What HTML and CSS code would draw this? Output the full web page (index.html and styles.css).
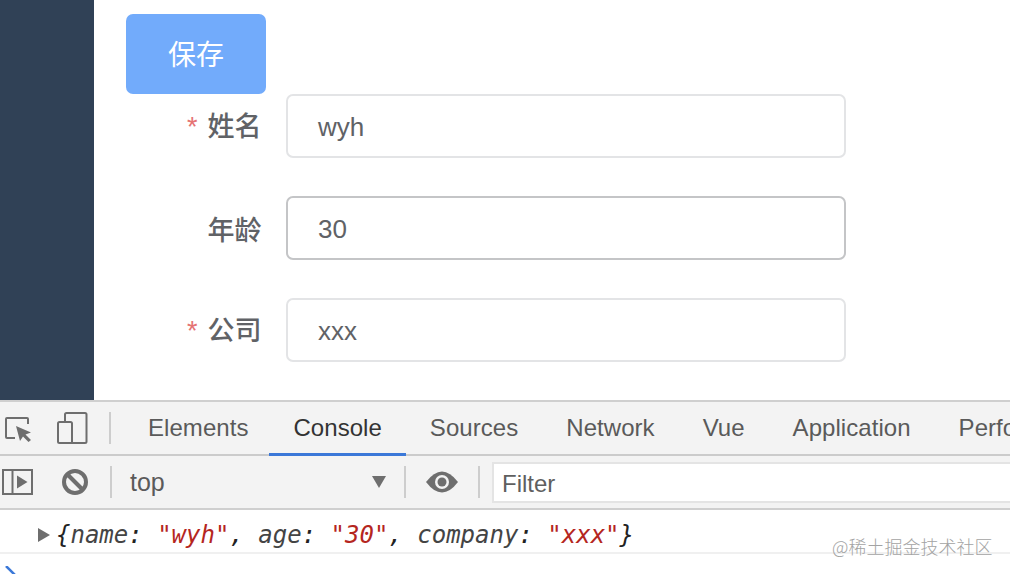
FILE: index.html
```html
<!DOCTYPE html>
<html lang="zh">
<head>
<meta charset="utf-8">
<title>表单</title>
<link rel="stylesheet" href="styles.css">
</head>
<body>
<div class="page">
  <aside class="sidebar"></aside>
  <main class="main">
    <button class="save">保存</button>
    <form class="form">
      <div class="row">
        <label class="label"><span class="req">*</span>姓名</label>
        <div class="input">wyh</div>
      </div>
      <div class="row">
        <label class="label">年龄</label>
        <div class="input hover">30</div>
      </div>
      <div class="row">
        <label class="label"><span class="req">*</span>公司</label>
        <div class="input">xxx</div>
      </div>
    </form>
  </main>
</div>
<section class="devtools">
  <div class="tabbar">
    <svg class="ic-inspect" width="30" height="30" viewBox="0 0 30 30">
      <path d="M11 25H3Q2 25 2 24V6Q2 5 3 5H23Q24 5 24 6V11" fill="none" stroke="#6e6e6e" stroke-width="2"/>
      <path d="M12 13L27 19.500L21.500 21.500L27 27L24.500 29L19 23.500L16 28Z" fill="#6e6e6e"/>
    </svg>
    <svg class="ic-device" width="32" height="34" viewBox="0 0 32 34">
      <path d="M9 11V3.500Q9 2 10.500 2H29Q30.500 2 30.500 3.500V30.500Q30.500 32 29 32H3.500Q2 32 2 30.500V12.500Q2 11 3.500 11H14.500Q16 11 16 12.500V32" fill="none" stroke="#6e6e6e" stroke-width="2"/>
    </svg>
    <span class="sep sep-a"></span>
    <nav class="tabs">
      <span class="tab">Elements</span>
      <span class="tab active">Console</span>
      <span class="tab">Sources</span>
      <span class="tab">Network</span>
      <span class="tab">Vue</span>
      <span class="tab">Application</span>
      <span class="tab">Performance</span>
    </nav>
  </div>
  <div class="toolbar">
    <svg class="ic-drawer" width="31" height="26" viewBox="0 0 31 26">
      <rect x="1" y="1" width="29" height="24" fill="none" stroke="#6e6e6e" stroke-width="2"/>
      <path d="M10.500 1V25" stroke="#6e6e6e" stroke-width="2"/>
      <path d="M15 6.500L25.500 13L15 19.500Z" fill="#6e6e6e"/>
    </svg>
    <svg class="ic-block" width="28" height="28" viewBox="0 0 28 28">
      <circle cx="14" cy="14" r="11" fill="none" stroke="#6e6e6e" stroke-width="4"/>
      <path d="M6 6L22 22" stroke="#6e6e6e" stroke-width="4"/>
    </svg>
    <span class="sep sep-b"></span>
    <div class="context">
      <span class="context-name">top</span>
      <svg class="caret" width="14" height="12" viewBox="0 0 14 12"><path d="M0 0H14L7 12Z" fill="#6e6e6e"/></svg>
    </div>
    <span class="sep"></span>
    <svg class="ic-eye" width="34" height="24" viewBox="0 0 34 24">
      <path d="M1 12Q9 1.500 17 1.500T33 12Q25 22.500 17 22.500T1 12Z" fill="#6e6e6e"/>
      <circle cx="17" cy="12" r="7" fill="#f3f3f3"/>
      <circle cx="17" cy="12" r="4.500" fill="#6e6e6e"/>
    </svg>
    <span class="sep sep-c"></span>
    <div class="filter">Filter</div>
  </div>
  <div class="log">
    <svg class="expand" width="12" height="16" viewBox="0 0 12 16"><path d="M0 1L12 8L0 15Z" fill="#6e6e6e"/></svg>
    <code class="obj"><span class="punct">{</span>name<span class="punct">:</span> <span class="str">"wyh"</span><span class="punct">,</span> age<span class="punct">:</span> <span class="str">"30"</span><span class="punct">,</span> company<span class="punct">:</span> <span class="str">"xxx"</span><span class="punct">}</span></code>
  </div>
  <div class="prompt">
    <svg width="14" height="10" viewBox="0 0 14 10"><path d="M1 0L11 10" stroke="#3b78d8" stroke-width="2.500" fill="none"/></svg>
  </div>
  <span class="watermark">@稀土掘金技术社区</span>
</section>
</body>
</html>
```

FILE: styles.css
```css
html, body {
  margin: 0;
  padding: 0;
  height: 574px;
  overflow: hidden;
  background: #fff;
  font-family: "Liberation Sans", "Noto Sans CJK SC", sans-serif;
}
.page {
  display: flex;
  height: 400px;
}
.sidebar {
  width: 94px;
  flex: none;
  background: #304156;
}
.main {
  flex: 1;
  padding: 14px 0 0 32px;
}
.save {
  display: block;
  width: 140px;
  height: 80px;
  padding: 0 0 2px;
  border: 0;
  border-radius: 7px;
  background: #72abfb;
  color: #fff;
  font: 28px "Noto Sans CJK SC", sans-serif;
}
.form {
  display: flex;
  flex-direction: column;
  gap: 38px;
}
.row {
  display: flex;
  align-items: center;
  height: 64px;
}
.label {
  width: 135.500px;
  flex: none;
  text-align: right;
  color: #606266;
  font: 500 27px/1 "Noto Sans CJK SC", sans-serif;
}
.req {
  margin-right: 10px;
  color: #e57373;
  font: 400 27px/1 "Liberation Sans", sans-serif;
}
.input {
  box-sizing: border-box;
  width: 560px;
  height: 64px;
  margin-left: 24.500px;
  padding-left: 30px;
  border: 2px solid #e3e4e6;
  border-radius: 7px;
  color: #606266;
  font: 26px/62px "Liberation Sans", sans-serif;
}
.input.hover {
  border-color: #c4c5c7;
}
.devtools {
  position: relative;
  height: 174px;
  overflow: hidden;
  border-top: 2px solid #cfcfcf;
  box-sizing: border-box;
}
.tabbar {
  display: flex;
  align-items: center;
  box-sizing: border-box;
  height: 54px;
  background: #f3f3f3;
  border-bottom: 2px solid #cbcbcb;
}
.toolbar {
  display: flex;
  align-items: center;
  box-sizing: border-box;
  height: 54px;
  background: #f3f3f3;
  border-bottom: 2px solid #cfcfcf;
}
.ic-inspect { margin-left: 4px; flex: none; }
.ic-device { margin-left: 22px; flex: none; }
.sep {
  flex: none;
  width: 2px;
  height: 32px;
  background: #cdcdcd;
}
.sep-a { margin-left: 21px; }
.tabs {
  display: flex;
  align-self: stretch;
  margin-left: 13px;
}
.tab {
  display: flex;
  align-items: center;
  box-sizing: border-box;
  padding: 0 24px;
  margin-bottom: -2px;
  border-bottom: 3px solid transparent;
  color: #5a5a5a;
  font-size: 24px;
  letter-spacing: .05px;
  white-space: nowrap;
}
.tab:first-child {
  padding-right: 21px;
}
.tab.active {
  color: #333;
  border-bottom-color: #3b78d8;
}
.ic-drawer { margin-left: 2px; flex: none; }
.ic-block { margin-left: 28px; flex: none; }
.sep-b { margin-left: 21px; }
.context {
  flex: none;
  display: flex;
  align-items: center;
  justify-content: space-between;
  box-sizing: border-box;
  width: 292px;
  padding: 0 18px 0 18px;
  color: #5a5a5a;
  font-size: 25px;
}
.ic-eye { margin-left: 19px; flex: none; }
.sep-c { margin-left: 19px; }
.filter {
  box-sizing: border-box;
  flex: none;
  width: 530px;
  height: 41px;
  margin-left: 12px;
  padding-left: 8px;
  background: #fff;
  border: 2px solid #e4e4e4;
  color: #5f5f5f;
  font-size: 24px;
  line-height: 40px;
}
.log {
  display: flex;
  align-items: center;
  box-sizing: border-box;
  height: 44px;
  padding: 7px 0 0 38px;
  border-bottom: 2px solid #f0f0f0;
}
.expand { flex: none; }
.obj {
  margin-left: 6px;
  color: #444;
  font: italic 24px "DejaVu Sans Mono", monospace;
  white-space: pre;
}
.punct { color: #222; }
.str { color: #b5261e; }
.prompt {
  padding: 12px 0 0 5px;
  line-height: 0;
}
.watermark {
  position: absolute;
  left: 832px;
  top: 131px;
  color: #a3a3a3;
  font: 300 18px "Noto Sans CJK SC", sans-serif;
  white-space: nowrap;
}
```
